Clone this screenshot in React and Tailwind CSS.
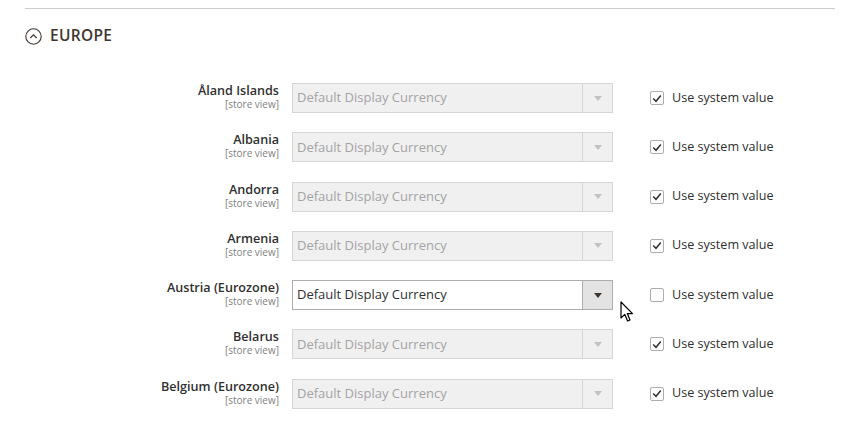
import React from "react";

const countries = [
  { name: "Åland Islands", checked: true },
  { name: "Albania", checked: true },
  { name: "Andorra", checked: true },
  { name: "Armenia", checked: true },
  { name: "Austria (Eurozone)", checked: false },
  { name: "Belarus", checked: true },
  { name: "Belgium (Eurozone)", checked: true },
];

const CurrencyRow = ({ name, checked }) => {
  const disabled = checked;
  return (
    <div className="flex items-start h-[30px]">
      <div className="w-[279px] text-right pt-[1px]">
        <div className="text-[12.6px] font-semibold text-[#303030] leading-[14px]">{name}</div>
        <div className="mt-[1px] text-[10px] text-[#808080] leading-[11px]">[store view]</div>
      </div>
      <div
        className={
          "ml-[13px] w-[321px] h-[30px] flex border " +
          (disabled ? "border-[#d6d6d6] bg-[#f0f0f0]" : "border-[#adadad] bg-white")
        }
      >
        <div
          className={
            "flex-1 flex items-center pl-[4px] text-[13px] " +
            (disabled ? "text-[#a4a4a4]" : "text-[#303030]")
          }
        >
          Default Display Currency
        </div>
        <div
          className={
            "w-[30px] flex items-center justify-center border-l " +
            (disabled ? "border-[#d6d6d6] bg-[#f0f0f0]" : "border-[#adadad] bg-[#e3e3e3]")
          }
        >
          <svg width="8" height="5" viewBox="0 0 8 5">
            <path d="M0 0 L8 0 L4 5 Z" fill={disabled ? "#c2c2c2" : "#41362f"} />
          </svg>
        </div>
      </div>
      <div className="ml-[37px] h-[30px] flex items-center">
        <div className="w-[14px] h-[14px] border border-[#adadad] rounded-[2px] bg-white flex items-center justify-center">
          {checked && (
            <svg width="10" height="9" viewBox="0 0 10 9">
              <path d="M1.2 4.5 L4 7.3 L8.8 1.5" fill="none" stroke="#303030" strokeWidth="1.5" />
            </svg>
          )}
        </div>
        <span className="ml-[8px] text-[12.6px] text-[#303030]">Use system value</span>
      </div>
    </div>
  );
};

const App = () => {
  return (
    <div
      className="relative w-[860px] h-[428px] bg-white overflow-hidden"
      style={{ fontFamily: '"Open Sans", sans-serif' }}
    >
      <div className="pt-[8px] px-[25px]">
        <div className="border-t border-[#cccccc] w-[810px]" />
        <div className="flex items-center h-[18px] mt-[18px]">
          <svg width="17" height="17" viewBox="0 0 17 17">
            <circle cx="8.5" cy="8.5" r="7.7" fill="none" stroke="#41362f" strokeWidth="1.1" />
            <path d="M5.3 10 L8.5 6.8 L11.7 10" fill="none" stroke="#41362f" strokeWidth="1.2" />
          </svg>
          <span className="ml-[8px] text-[15.5px] font-semibold text-[#41362f] tracking-[0.3px]">EUROPE</span>
        </div>
      </div>
      <div className="mt-[38px] flex flex-col gap-[19.3px]">
        {countries.map((c) => (
          <CurrencyRow key={c.name} {...c} />
        ))}
      </div>
      <svg
        className="absolute left-[620px] top-[301px]"
        width="14"
        height="22"
        viewBox="0 0 14 22"
      >
        <path
          d="M1 1 L1 17 L4.8 13.4 L7.6 20 L10 19 L7.3 12.6 L12.5 12.6 Z"
          fill="#ffffff"
          stroke="#000000"
          strokeWidth="1.2"
          strokeLinejoin="round"
        />
      </svg>
    </div>
  );
};

export default App;
